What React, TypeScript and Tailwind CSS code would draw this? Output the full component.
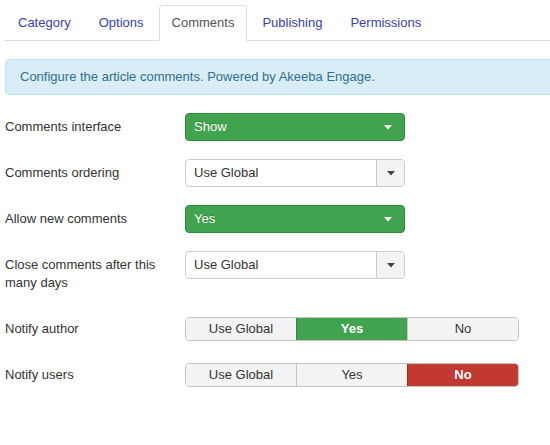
import React from "react";

const font = { fontFamily: '"Liberation Sans", Arial, Helvetica, sans-serif' };

function Caret({ color }: { color: string }) {
  return (
    <svg width="8" height="5" viewBox="0 0 8 5" className="block">
      <path d="M0 0 L8 0 L4 4.5 Z" fill={color} />
    </svg>
  );
}

function ColorSelect({ value }: { value: string }) {
  return (
    <div className="flex h-[28px] w-[220px] items-center justify-between rounded-[4px] border border-[#2f8a3c] bg-[#41a34f] pl-[8px] pr-[12px] text-white [text-shadow:0_-1px_0_rgba(0,0,0,0.2)]">
      <span>{value}</span>
      <Caret color="#ffffff" />
    </div>
  );
}

function PlainSelect({ value }: { value: string }) {
  return (
    <div className="flex h-[28px] w-[220px] items-stretch rounded-[4px] border border-[#cccccc] bg-white">
      <span className="flex flex-1 items-center pl-[8px] text-[#333333]">{value}</span>
      <span className="flex w-[28px] items-center justify-center rounded-r-[3px] border-l border-[#cccccc] bg-[#f3f3f3]">
        <Caret color="#444444" />
      </span>
    </div>
  );
}

type Seg = { label: string; active?: "green" | "red" };

function RadioGroup({ items }: { items: Seg[] }) {
  return (
    <div className="flex h-[24px] w-[334px] overflow-hidden rounded-[4px] border border-[#c4c4c4]">
      {items.map((it, i) => {
        const base = "flex flex-1 items-center justify-center";
        const edge = i > 0 ? " border-l" : "";
        if (it.active === "green")
          return (
            <span key={it.label} className={base + edge + " border-[#2f8a3c] bg-[#41a34f] font-bold text-white"}>
              {it.label}
            </span>
          );
        if (it.active === "red")
          return (
            <span key={it.label} className={base + edge + " border-[#a32d26] bg-[#c1392f] font-bold text-white"}>
              {it.label}
            </span>
          );
        return (
          <span key={it.label} className={base + edge + " border-[#c4c4c4] bg-[#f3f3f3] text-[#333333]"}>
            {it.label}
          </span>
        );
      })}
    </div>
  );
}

function Row({ label, children, center }: { label: string; children: React.ReactNode; center?: boolean }) {
  return (
    <div className={"flex " + (center ? "items-center" : "items-start")}>
      <label className={"w-[180px] shrink-0 pr-[20px] text-[#333333] " + (center ? "" : "pt-[5px]")}>{label}</label>
      {children}
    </div>
  );
}

export default function App() {
  const tabs = ["Category", "Options", "Comments", "Publishing", "Permissions"];
  return (
    <div className="h-[445px] w-[550px] overflow-hidden bg-white text-[13px] leading-[18px]" style={font}>
      <div className="w-[580px] pl-[5px]">
        <ul className="flex border-b border-[#dddddd]">
          {tabs.map((t) => {
            const active = t === "Comments";
            return (
              <li key={t} className="mr-[2px] mt-[5px] -mb-px">
                <span
                  className={
                    "block rounded-t-[4px] border px-[12px] py-[8px] " +
                    (active
                      ? "border-[#dddddd] border-b-white bg-white text-[#555555]"
                      : "border-transparent text-[#3a40b3]")
                  }
                >
                  {t}
                </span>
              </li>
            );
          })}
        </ul>

        <div className="mt-[18px] rounded-[4px] border border-[#bce8f1] bg-[#d9edf7] py-[8px] pl-[14px] text-[#31708f]">
          Configure the article comments. Powered by Akeeba Engage.
        </div>

        <div className="mt-[18px] flex flex-col">
          <div className="mb-[18px]">
            <Row label="Comments interface">
              <ColorSelect value="Show" />
            </Row>
          </div>
          <div className="mb-[18px]">
            <Row label="Comments ordering">
              <PlainSelect value="Use Global" />
            </Row>
          </div>
          <div className="mb-[18px]">
            <Row label="Allow new comments">
              <ColorSelect value="Yes" />
            </Row>
          </div>
          <div className="mb-[25px]">
            <Row label="Close comments after this many days">
              <PlainSelect value="Use Global" />
            </Row>
          </div>
          <div className="mb-[22px]">
            <Row label="Notify author" center>
              <RadioGroup items={[{ label: "Use Global" }, { label: "Yes", active: "green" }, { label: "No" }]} />
            </Row>
          </div>
          <div>
            <Row label="Notify users" center>
              <RadioGroup items={[{ label: "Use Global" }, { label: "Yes" }, { label: "No", active: "red" }]} />
            </Row>
          </div>
        </div>
      </div>
    </div>
  );
}
